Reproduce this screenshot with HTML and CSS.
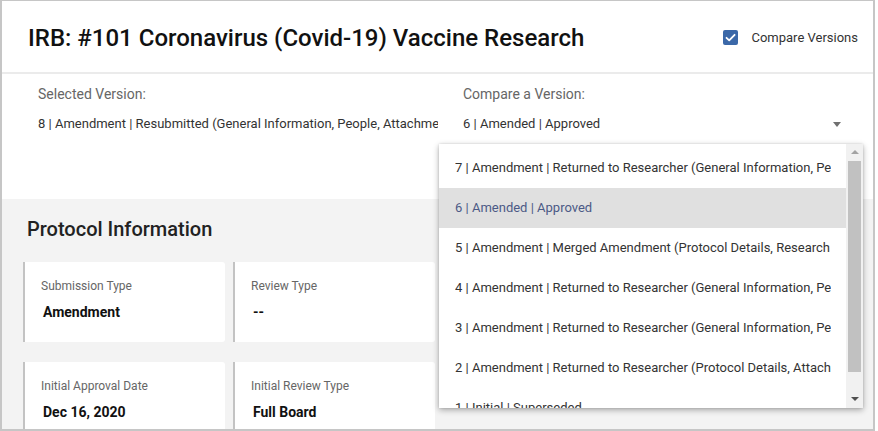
FILE: index.html
```html
<!DOCTYPE html>
<html lang="en">
<head>
<meta charset="utf-8">
<title>IRB Protocol Compare</title>
<link rel="stylesheet" href="styles.css">
</head>
<body>
<div class="frame">
  <header class="header">
    <h1 class="title">IRB: #101 Coronavirus (Covid-19) Vaccine Research</h1>
    <label class="compare-toggle">
      <span class="checkbox">
        <svg width="15" height="15" viewBox="0 0 15 15"><polyline points="3.5,7.8 6.2,10.4 11.6,4.8" fill="none" stroke="#fff" stroke-width="1.8" stroke-linecap="round" stroke-linejoin="round"/></svg>
      </span>
      <span class="compare-text">Compare Versions</span>
    </label>
  </header>

  <section class="versions">
    <div class="version-col version-col--selected">
      <div class="version-label">Selected Version:</div>
      <div class="version-value">8 | Amendment | Resubmitted (General Information, People, Attachments)</div>
    </div>
    <div class="version-col version-col--compare">
      <div class="version-label">Compare a Version:</div>
      <div class="version-value version-select">
        <span>6 | Amended | Approved</span>
        <span class="caret"></span>
      </div>
    </div>
  </section>

  <section class="protocol">
    <h2 class="protocol-title">Protocol Information</h2>
    <div class="cards">
      <div class="card"><div class="card-label">Submission Type</div><div class="card-value">Amendment</div></div>
      <div class="card"><div class="card-label">Review Type</div><div class="card-value">--</div></div>
      <div class="card"><div class="card-label">Initial Approval Date</div><div class="card-value">Dec 16, 2020</div></div>
      <div class="card"><div class="card-label">Initial Review Type</div><div class="card-value">Full Board</div></div>
    </div>
  </section>

  <div class="menu">
    <ul class="menu-list">
      <li class="menu-item"><span class="menu-text">7 | Amendment | Returned to Researcher (General Information, People, Attachments)</span></li>
      <li class="menu-item menu-item--active"><span class="menu-text">6 | Amended | Approved</span></li>
      <li class="menu-item"><span class="menu-text">5 | Amendment | Merged Amendment (Protocol Details, Research Plan)</span></li>
      <li class="menu-item"><span class="menu-text">4 | Amendment | Returned to Researcher (General Information, People)</span></li>
      <li class="menu-item"><span class="menu-text">3 | Amendment | Returned to Researcher (General Information, People)</span></li>
      <li class="menu-item"><span class="menu-text">2 | Amendment | Returned to Researcher (Protocol Details, Attachments)</span></li>
      <li class="menu-item"><span class="menu-text">1 | Initial | Superseded</span></li>
    </ul>
    <div class="scrollbar">
      <span class="scroll-arrow scroll-arrow--up"></span>
      <span class="scroll-thumb"></span>
      <span class="scroll-arrow scroll-arrow--down"></span>
    </div>
  </div>
</div>
</body>
</html>
```

FILE: styles.css
```css
* { box-sizing: border-box; }

html, body {
  margin: 0;
  padding: 0;
  background: #ffffff;
}

body {
  font-family: Roboto, "Liberation Sans", Arial, sans-serif;
  color: #333;
}

.frame {
  position: relative;
  width: 875px;
  height: 431px;
  border-style: solid;
  border-color: #c6c6c6;
  border-width: 1px 2px 2px 2px;
  overflow: hidden;
  background: #fff;
  display: flex;
  flex-direction: column;
}

/* Header */
.header {
  height: 73px;
  flex: none;
  display: flex;
  align-items: center;
  justify-content: space-between;
  padding: 0 15px 0 26px;
  border-bottom: 2px solid #ebebeb;
}

.title {
  margin: 0;
  font-size: 24px;
  font-weight: 500;
  color: #111;
  line-height: 30px;
  position: relative;
  top: 1px;
}

.compare-toggle {
  display: flex;
  align-items: center;
  gap: 13px;
  position: relative;
  top: 1px;
}

.checkbox {
  width: 15px;
  height: 15px;
  border-radius: 2px;
  background: #3b68a8;
  display: flex;
}

.compare-text {
  font-size: 13px;
  color: #333;
}

/* Versions */
.versions {
  height: 125px;
  flex: none;
  display: flex;
  gap: 25px;
  padding: 12px 0 0 36px;
}

.version-col--selected { width: 400px; }
.version-col--compare { width: 385px; }

.version-label {
  font-size: 14px;
  color: #666;
  line-height: 16px;
}

.version-value {
  margin-top: 14px;
  font-size: 13px;
  line-height: 16px;
  color: #333;
  white-space: nowrap;
  overflow: hidden;
}

.version-select {
  display: flex;
  align-items: center;
  justify-content: space-between;
  padding-right: 7px;
}

.caret {
  width: 0;
  height: 0;
  border-left: 4.5px solid transparent;
  border-right: 4.5px solid transparent;
  border-top: 5px solid #707070;
}

/* Protocol */
.protocol {
  flex: 1;
  background: #f3f3f3;
  padding: 17px 0 0 21px;
}

.protocol-title {
  margin: 0 0 0 4px;
  font-size: 20px;
  font-weight: 500;
  line-height: 26px;
  color: #222;
}

.cards {
  margin-top: 20px;
  display: grid;
  grid-template-columns: repeat(2, 202px);
  grid-auto-rows: 80px;
  column-gap: 8px;
  row-gap: 20px;
}

.card {
  background: #fff;
  border-left: 2px solid #c3c3c3;
  border-radius: 0 3px 3px 0;
  padding: 16px 16px 0 16px;
}

.card-label {
  font-size: 12px;
  line-height: 16px;
  color: #666;
}

.card-value {
  margin-top: 9px;
  padding-left: 2px;
  font-size: 14px;
  line-height: 18px;
  font-weight: 700;
  color: #111;
}

/* Dropdown menu overlay */
.menu {
  position: absolute;
  left: 437px;
  top: 143px;
  width: 424px;
  height: 264px;
  background: #fff;
  box-shadow: 0 2px 6px rgba(0, 0, 0, 0.32), 0 0 2px rgba(0, 0, 0, 0.12);
  display: flex;
  overflow: hidden;
}

.menu-list {
  list-style: none;
  margin: 0;
  padding: 4px 0 0 0;
  flex: 1;
  min-width: 0;
}

.menu-item {
  height: 40px;
  line-height: 40px;
  padding: 0 15px 0 16px;
  font-size: 13px;
  color: #333;
}

.menu-text {
  display: block;
  white-space: nowrap;
  overflow: hidden;
}

.menu-item--active {
  background: #e0e0e0;
  color: #4c5a86;
}

.scrollbar {
  width: 17px;
  flex: none;
  background: #f1f1f1;
  position: relative;
  display: flex;
  flex-direction: column;
  align-items: center;
}

.scroll-arrow {
  width: 0;
  height: 0;
  border-left: 4px solid transparent;
  border-right: 4px solid transparent;
}

.scroll-arrow--up {
  margin-top: 6px;
  border-bottom: 4px solid #a3a3a3;
}

.scroll-thumb {
  margin-top: 7px;
  width: 13px;
  height: 211px;
  background: #c1c1c1;
}

.scroll-arrow--down {
  margin-top: 25px;
  border-top: 4px solid #505050;
}
```
